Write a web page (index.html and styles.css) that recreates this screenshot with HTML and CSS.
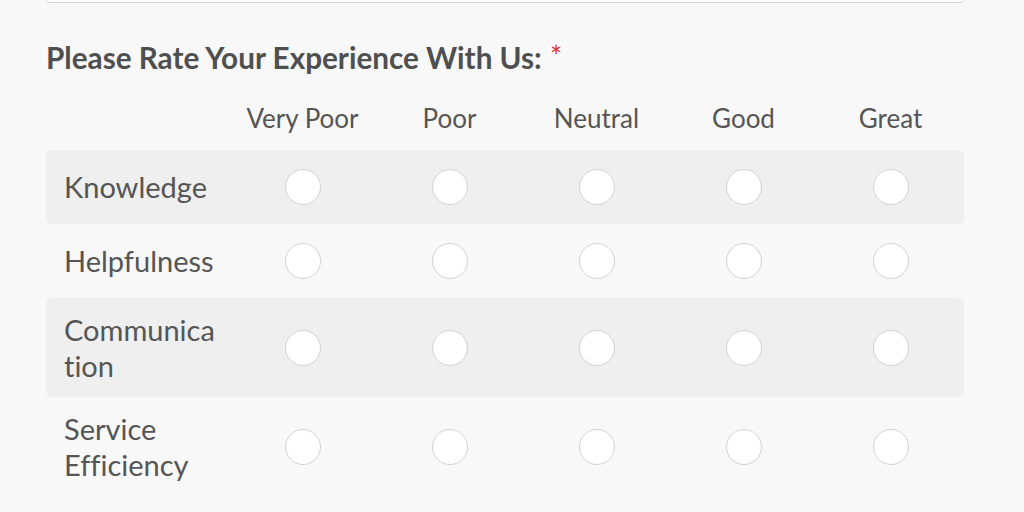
FILE: index.html
```html
<!DOCTYPE html>
<html>
<head>
<meta charset="utf-8">
<link rel="stylesheet" href="styles.css">
</head>
<body>
<div class="form">
  <div class="prev-field"></div>
  <div class="label">Please Rate Your Experience With Us: <span class="req">*</span></div>
  <table class="likert">
    <thead>
      <tr>
        <th class="rowlabel"></th>
        <th>Very Poor</th>
        <th>Poor</th>
        <th>Neutral</th>
        <th>Good</th>
        <th>Great</th>
      </tr>
    </thead>
    <tbody>
      <tr class="odd">
        <td class="rowlabel">Knowledge</td>
        <td><span class="radio"></span></td><td><span class="radio"></span></td><td><span class="radio"></span></td><td><span class="radio"></span></td><td><span class="radio"></span></td>
      </tr>
      <tr>
        <td class="rowlabel">Helpfulness</td>
        <td><span class="radio"></span></td><td><span class="radio"></span></td><td><span class="radio"></span></td><td><span class="radio"></span></td><td><span class="radio"></span></td>
      </tr>
      <tr class="odd">
        <td class="rowlabel">Communication</td>
        <td><span class="radio"></span></td><td><span class="radio"></span></td><td><span class="radio"></span></td><td><span class="radio"></span></td><td><span class="radio"></span></td>
      </tr>
      <tr>
        <td class="rowlabel">Service Efficiency</td>
        <td><span class="radio"></span></td><td><span class="radio"></span></td><td><span class="radio"></span></td><td><span class="radio"></span></td><td><span class="radio"></span></td>
      </tr>
    </tbody>
  </table>
</div>
</body>
</html>
```
FILE: styles.css
```css
html, body {
  margin: 0;
  padding: 0;
  background: #f8f8f8;
  font-family: Lato, "Liberation Sans", sans-serif;
  color: #555555;
  font-variant-ligatures: no-common-ligatures;
}
.form {
  width: 918px;
  margin-left: 46px;
}
.prev-field {
  height: 2px;
  border-bottom: 1px solid #d4d4d4;
  border-left: 1px solid #e4e4e4;
  border-right: 1px solid #e4e4e4;
  background: #ffffff;
  border-radius: 0 0 3px 3px;
}
.label {
  margin-top: 35px;
  font-size: 29.7px;
  font-weight: 700;
  color: #4f4f4f;
  line-height: 36px;
}
.req {
  color: #d63637;
  font-weight: 400;
  font-size: 29px;
  vertical-align: 2px;
  margin-left: 1px;
}
.likert {
  width: 918px;
  margin-top: 0;
  border-collapse: separate;
  border-spacing: 0;
  table-layout: fixed;
}
.likert th {
  font-weight: 400;
  font-size: 26px;
  line-height: 34px;
  color: #555555;
  width: 147px;
  padding: 25px 0 15px 0;
  text-align: center;
  vertical-align: middle;
}
.likert th.rowlabel, .likert td.rowlabel {
  width: 183px;
}
.likert td {
  text-align: center;
  vertical-align: middle;
  padding: 0;
}
.likert td.rowlabel {
  text-align: left;
  padding: 13.5px 8px 13.5px 18px;
  font-size: 29px;
  line-height: 36px;
  color: #555555;
  overflow-wrap: anywhere;
  box-sizing: border-box;
}
.likert tbody tr {
  height: 74px;
}
.likert tr.odd td {
  background: #efefef;
}
.likert tr.odd td:first-child {
  border-radius: 6px 0 0 6px;
}
.likert tr.odd td:last-child {
  border-radius: 0 6px 6px 0;
}
.radio {
  display: inline-block;
  width: 34px;
  height: 34px;
  border: 1px solid #d2d2d2;
  border-radius: 50%;
  background: #ffffff;
  vertical-align: middle;
}
```
